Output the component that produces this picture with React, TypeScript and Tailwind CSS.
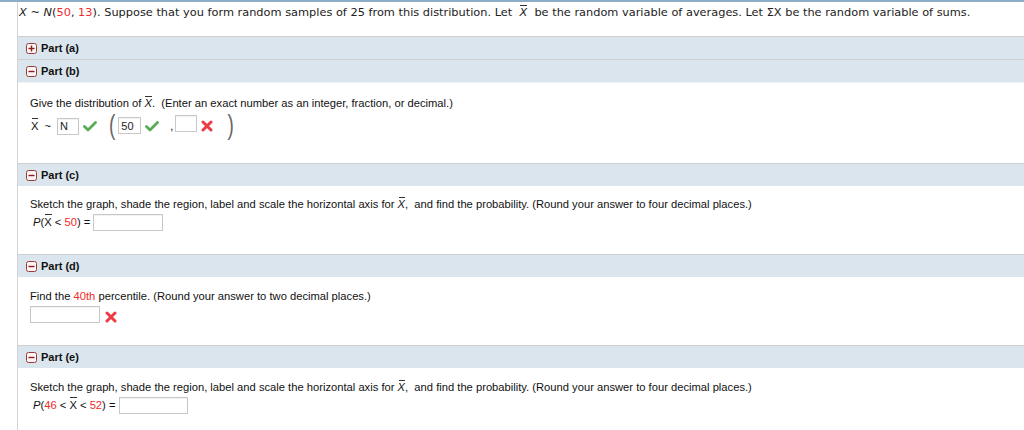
import React from "react";

const Xbar = ({ italic = true }: { italic?: boolean }) => (
  <span className={`relative inline-block ${italic ? "italic" : ""}`}>
    <span className="absolute left-[1px] right-[0px] top-[0px] h-[1px] bg-[#333]" />
    X
  </span>
);

const Toggle = ({ open }: { open: boolean }) => (
  <svg width="11" height="11" viewBox="0 0 11 11" className="shrink-0">
    <rect x="0.5" y="0.5" width="10" height="10" rx="2" fill="#fbf4f4" stroke="#9c3a3a" />
    <line x1="2.5" y1="5.5" x2="8.5" y2="5.5" stroke="#8a1e1e" strokeWidth="1.4" />
    {!open && <line x1="5.5" y1="2.5" x2="5.5" y2="8.5" stroke="#8a1e1e" strokeWidth="1.4" />}
  </svg>
);

const Check = () => (
  <svg width="14" height="11" viewBox="0 0 14 11" className="shrink-0">
    <path d="M1.5 5.5 L5 9 L12.5 1.5" fill="none" stroke="#5aab55" strokeWidth="2.8" strokeLinejoin="round" strokeLinecap="round" />
  </svg>
);

const Cross = () => (
  <svg width="12" height="12" viewBox="0 0 12 12" className="shrink-0">
    <path d="M2 2 L10 10 M10 2 L2 10" stroke="#ec3b45" strokeWidth="3" strokeLinecap="round" />
  </svg>
);

const Header = ({ label, open }: { label: string; open: boolean }) => (
  <div className="h-[23px] border-t border-[#cfcfcf] bg-[#dae5ed] flex items-center gap-[4px] pl-[8px] font-bold text-[11px] text-[#111]">
    <Toggle open={open} />
    <span>{label}</span>
  </div>
);

const Box = ({ w, value }: { w: string; value?: string }) => (
  <span className={`inline-flex items-center ${w} h-[17px] border border-[#c8c8c8] bg-white px-[2px] text-[11px] text-[#222] shadow-[inset_0_1px_1px_rgba(0,0,0,0.06)]`}>
    {value}
  </span>
);

const Red = ({ children }: { children: React.ReactNode }) => (
  <span className="text-[#ee2b2b]">{children}</span>
);

const Paren = ({ ch }: { ch: string }) => (
  <span className="inline-block text-[19px] leading-none text-[#666] scale-y-[1.5] -mt-[2px]">{ch}</span>
);

export default function App() {
  return (
    <div
      className="w-[1024px] h-[430px] overflow-hidden bg-white border-t-2 border-[#8eadc4] flex"
      style={{ fontFamily: '"Liberation Sans", Arial, sans-serif' }}
    >
      <div className="w-[17px] shrink-0" />
      <div className="flex-1 border-l border-[#d4d4d4] flex flex-col">
        <div
          className="h-[34px] pt-[3px] pl-[1px] text-[11.35px] leading-[14px] text-[#222] whitespace-pre"
          style={{ fontFamily: '"DejaVu Sans", Verdana, sans-serif' }}
        >
          <span className="italic">X</span>{" ~ "}<span className="italic">N</span>(<Red>50</Red>, <Red>13</Red>){". Suppose that you form random samples of 25 from this distribution. Let  "}<Xbar />{"  be the random variable of averages. Let ΣX be the random variable of sums."}
        </div>

        <Header label="Part (a)" open={false} />
        <Header label="Part (b)" open={true} />
        <div className="h-[81px] border-t border-[#eef3f6] pl-[12px] pt-[13px] text-[11.2px] text-[#111]">
          <div className="h-[14px] leading-[14px] whitespace-pre">
            {"Give the distribution of "}<Xbar />{".  (Enter an exact number as an integer, fraction, or decimal.)"}
          </div>
          <div className="mt-[2px] h-[28px] flex items-center pl-[1px]">
            <Xbar italic={false} />
            <span className="ml-[6px] mr-[6px]">~</span>
            <Box w="w-[22px]" value="N" />
            <span className="ml-[4px]"><Check /></span>
            <span className="ml-[12px]"><Paren ch="(" /></span>
            <span className="ml-[3px]"><Box w="w-[23px]" value="50" /></span>
            <span className="ml-[4px]"><Check /></span>
            <span className="ml-[11px]">,</span>
            <span className="ml-[2px]"><Box w="w-[22px]" /></span>
            <span className="ml-[4px]"><Cross /></span>
            <span className="ml-[14px]"><Paren ch=")" /></span>
          </div>
        </div>

        <Header label="Part (c)" open={true} />
        <div className="h-[68px] pl-[12px] pt-[11px] text-[11.2px] text-[#111]">
          <div className="h-[14px] leading-[14px] whitespace-pre">
            {"Sketch the graph, shade the region, label and scale the horizontal axis for "}<Xbar />{",  and find the probability. (Round your answer to four decimal places.)"}
          </div>
          <div className="mt-[3px] flex items-center pl-[3px]">
            <span className="whitespace-pre">
              <span className="italic">P</span>(<Xbar italic={false} />{" < "}<Red>50</Red>{") = "}
            </span>
            <Box w="w-[70px]" />
          </div>
        </div>

        <Header label="Part (d)" open={true} />
        <div className="h-[68px] pl-[12px] pt-[12px] text-[11.2px] text-[#111]">
          <div className="h-[14px] leading-[14px] whitespace-pre">
            {"Find the "}<Red>40th</Red>{" percentile. (Round your answer to two decimal places.)"}
          </div>
          <div className="mt-[3px] flex items-center">
            <Box w="w-[70px]" />
            <span className="ml-[5px] mt-[4px]"><Cross /></span>
          </div>
        </div>

        <Header label="Part (e)" open={true} />
        <div className="flex-1 pl-[12px] pt-[12px] text-[11.2px] text-[#111]">
          <div className="h-[14px] leading-[14px] whitespace-pre">
            {"Sketch the graph, shade the region, label and scale the horizontal axis for "}<Xbar />{",  and find the probability. (Round your answer to four decimal places.)"}
          </div>
          <div className="mt-[3px] flex items-center pl-[3px]">
            <span className="whitespace-pre">
              <span className="italic">P</span>(<Red>46</Red>{" < "}<Xbar italic={false} />{" < "}<Red>52</Red>{") = "}
            </span>
            <Box w="w-[69px]" />
          </div>
        </div>
      </div>
    </div>
  );
}
